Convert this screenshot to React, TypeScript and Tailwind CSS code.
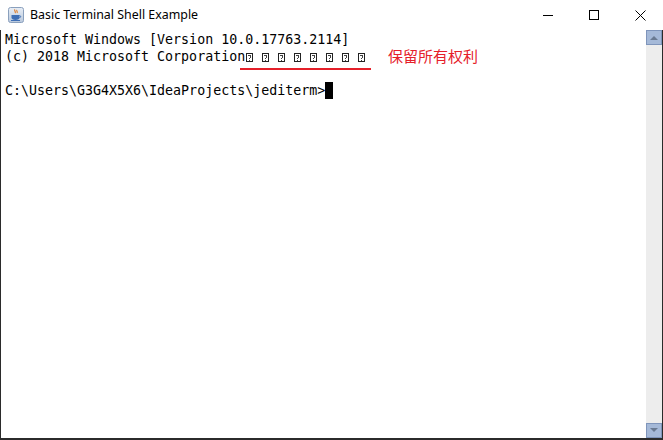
import React from "react";

const Box = () => (
  <span className="inline-block w-[8px] h-[17px] align-top relative">
    <span className="absolute left-[1px] top-[5px] w-[7px] h-[9px] border border-[#222] bg-white">
      <span className="absolute left-[1px] top-[1px] w-[3px] h-[1px] bg-[#444]" />
      <span className="absolute left-[3px] top-[2px] w-[1px] h-[2px] bg-[#444]" />
      <span className="absolute left-[2px] top-[4px] w-[1px] h-[1px] bg-[#444]" />
      <span className="absolute left-[2px] top-[6px] w-[1px] h-[1px] bg-[#444]" />
    </span>
  </span>
);

const JavaIcon = () => (
  <svg width="16" height="16" viewBox="0 0 16 16">
    <defs>
      <linearGradient id="jg" x1="0" y1="0" x2="0" y2="1">
        <stop offset="0" stopColor="#e8eef6" />
        <stop offset="1" stopColor="#b9c8dc" />
      </linearGradient>
    </defs>
    <rect x="0.5" y="0.5" width="15" height="15" rx="2" fill="url(#jg)" stroke="#8aa0bd" />
    <path d="M7 2.5c-1.5 1.2 1.5 2 0 3.5M9 3c-1 1 1 1.6 0 2.8" stroke="#e0781e" strokeWidth="1.1" fill="none" />
    <path d="M3.5 8h8v2.5c0 1.5-1.5 2.5-4 2.5s-4-1-4-2.5z" fill="#3f6fb5" />
    <path d="M11.5 8.6c1.6 0 1.6 2 0 2" stroke="#3f6fb5" strokeWidth="1" fill="none" />
    <path d="M3 13.5h9" stroke="#3f6fb5" strokeWidth="1" />
  </svg>
);

const ScrollBtn = ({ up }: { up: boolean }) => (
  <div className="w-[16px] h-[15px] bg-[#a5b9d8] border border-[#7f95bb] flex items-center justify-center">
    <svg width="8" height="5" viewBox="0 0 8 5">
      {up ? (
        <path d="M0 5 L4 1 L8 5 Z" fill="#6a7a92" />
      ) : (
        <path d="M0 0 L8 0 L4 4 Z" fill="#6a7a92" />
      )}
    </svg>
  </div>
);

export default function App() {
  const mono = { fontFamily: '"DejaVu Sans Mono", "Liberation Mono", monospace' };
  return (
    <div className="w-[663px] h-[440px] bg-white flex flex-col overflow-hidden">
      <div className="h-[30px] flex items-center shrink-0">
        <div className="ml-[8px] mr-[6px] flex items-center">
          <JavaIcon />
        </div>
        <div
          className="text-[12.4px] text-black"
          style={{ fontFamily: '"Noto Sans", "Liberation Sans", sans-serif' }}
        >
          Basic Terminal Shell Example
        </div>
        <div className="flex-1" />
        <div className="w-[46px] h-[30px] flex items-center justify-center">
          <div className="w-[10px] h-[1px] bg-black" />
        </div>
        <div className="w-[46px] h-[30px] flex items-center justify-center">
          <div className="w-[10px] h-[10px] border border-black" />
        </div>
        <div className="w-[46px] h-[30px] flex items-center justify-center">
          <svg width="11" height="11" viewBox="0 0 11 11">
            <path d="M0.5 0.5 L10.5 10.5 M10.5 0.5 L0.5 10.5" stroke="#000" strokeWidth="1" />
          </svg>
        </div>
      </div>
      <div className="flex-1 flex border-l border-r border-b-2 border-[#2b2b2b]">
        <div className="flex-1 relative pl-[4px] pt-[1px] text-black" style={mono}>
          <div className="text-[13.3px] leading-[17px] whitespace-pre">
            <div>Microsoft Windows [Version 10.0.17763.2114]</div>
            <div className="flex">
              <span>(c) 2018 Microsoft Corporation</span>
              <Box />
              <span> </span>
              <Box />
              <span> </span>
              <Box />
              <span> </span>
              <Box />
              <span> </span>
              <Box />
              <span> </span>
              <Box />
              <span> </span>
              <Box />
              <span> </span>
              <Box />
            </div>
            <div>&nbsp;</div>
            <div className="flex items-start">
              <span>C:\Users\G3G4X5X6\IdeaProjects\jediterm&gt;</span>
              <span className="inline-block w-[8px] h-[17px] bg-black" />
            </div>
          </div>
          <div className="absolute left-[239px] top-[38px] w-[131px] h-[2px] bg-[#e5202a]" />
          <div
            className="absolute left-[387px] top-[16px] text-[15px] leading-[20px] text-[#e5202a]"
            style={{ fontFamily: '"Noto Sans CJK SC", sans-serif' }}
          >
            保留所有权利
          </div>
        </div>
        <div className="w-[16px] bg-[#ededed] flex flex-col justify-between">
          <ScrollBtn up />
          <ScrollBtn up={false} />
        </div>
      </div>
    </div>
  );
}
